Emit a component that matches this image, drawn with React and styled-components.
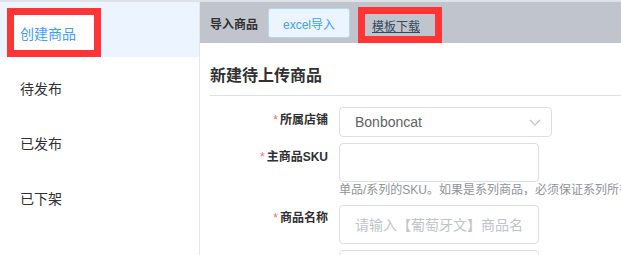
import styled, { createGlobalStyle } from 'styled-components'

const GlobalStyle = createGlobalStyle`
  html, body {
    margin: 0;
    padding: 0;
    background: #fff;
  }
  body {
    font-family: 'Liberation Sans', 'Noto Sans CJK SC', sans-serif;
    color: #303133;
  }
  * {
    box-sizing: border-box;
  }
`

const Page = styled.div`
  display: flex;
  height: 100vh;
  overflow: hidden;
  border-top: 2px solid #dfe2e7;
`

const Sidebar = styled.nav`
  flex: 0 0 200px;
  border-right: 1px solid #e6e6e6;
  display: flex;
  flex-direction: column;
`

const MenuItem = styled.div`
  height: 55px;
  display: flex;
  align-items: center;
  padding-left: 20px;
  font-size: 14px;
  color: #303133;
`

const ActiveItem = styled.div`
  height: 55px;
  margin-bottom: 3px;
  background: #ecf5ff;
  padding: 6px 0 0 7px;
  display: flex;
`

const Marked = styled.span`
  display: flex;
  align-items: center;
  height: 49px;
  border: 7px solid #ff3535;
  background: ${({ $fill }) => $fill || 'transparent'};
  padding: ${({ $pad }) => $pad};
  font-size: ${({ $size }) => $size};
  color: ${({ $color }) => $color};
`

const Main = styled.main`
  flex: 1;
  min-width: 0;
  overflow: hidden;
  display: flex;
  flex-direction: column;
`

const Toolbar = styled.div`
  height: 41px;
  flex: 0 0 41px;
  background: #c0c4cc;
  display: flex;
  align-items: center;
  padding-left: 10px;
`

const ToolLabel = styled.span`
  font-size: 12px;
  font-weight: bold;
  color: #303133;
  margin-right: 10px;
  margin-top: 1px;
`

const PlainButton = styled.button`
  width: 82px;
  height: 30px;
  margin-top: 1px;
  border: 1px solid #b3d8ff;
  background: #ecf5ff;
  color: #409eff;
  border-radius: 3px;
  font-family: inherit;
  font-size: 12px;
  padding: 0;
`

const LinkBox = styled(Marked)`
  align-self: flex-end;
  height: 36px;
  margin-left: 8px;
  text-decoration: underline;
`

const Body = styled.div`
  padding-left: 10px;
`

const Title = styled.h2`
  margin: 0;
  padding: 21px 0 7px;
  font-size: 16px;
  line-height: 24px;
  font-weight: bold;
  color: #303133;
  border-bottom: 1px solid #dcdfe6;
`

const Form = styled.div`
  padding-top: 11px;
  display: flex;
  flex-direction: column;
  gap: 6px;
`

const Row = styled.div`
  display: flex;
  align-items: flex-start;
`

const Label = styled.label`
  flex: 0 0 129px;
  padding-right: 11px;
  text-align: right;
  font-size: 12px;
  font-weight: bold;
  line-height: ${({ $lh }) => $lh || '26px'};
  color: #303133;
  white-space: nowrap;

  &::before {
    content: '*';
    color: #f56c6c;
    margin-right: 2px;
    font-weight: normal;
  }
`

const LabelSpace = styled.div`
  flex: 0 0 129px;
`

const Field = styled.div`
  display: flex;
  flex-direction: column;
  min-width: 0;
`

const Select = styled.div`
  width: 213px;
  height: 30px;
  border: 1px solid #dcdfe6;
  border-radius: 4px;
  display: flex;
  align-items: center;
  justify-content: space-between;
  padding: 0 10px 0 15px;
  font-size: 14px;
  color: #606266;
`

const Input = styled.input`
  width: 200px;
  height: 39px;
  border: 1px solid #dcdfe6;
  border-radius: 4px;
  padding: 0 15px;
  font-family: inherit;
  font-size: 14px;
  color: #606266;
  outline: none;

  &::placeholder {
    color: #c0c4cc;
  }
`

const Help = styled.div`
  font-size: 12px;
  line-height: 17px;
  color: #909399;
  white-space: nowrap;
`

const Chevron = () => (
  <svg width="12" height="7" viewBox="0 0 12 7" fill="none">
    <polyline points="1,1 6,6 11,1" stroke="#c0c4cc" strokeWidth="1.2" />
  </svg>
)

const menu = ['待发布', '已发布', '已下架']

export default function App() {
  return (
    <>
      <GlobalStyle />
      <Page>
        <Sidebar>
          <ActiveItem>
            <Marked $fill="#fff" $pad="0 18px 0 6px" $size="14px" $color="#409eff">
              创建商品
            </Marked>
          </ActiveItem>
          {menu.map((m) => (
            <MenuItem key={m}>{m}</MenuItem>
          ))}
        </Sidebar>
        <Main>
          <Toolbar>
            <ToolLabel>导入商品</ToolLabel>
            <PlainButton>excel导入</PlainButton>
            <LinkBox $pad="0 15px 0 7px" $size="12px" $color="#34495e">
              模板下载
            </LinkBox>
          </Toolbar>
          <Body>
            <Title>新建待上传商品</Title>
            <Form>
              <Row>
                <Label>所属店铺</Label>
                <Select>
                  <span>Bonboncat</span>
                  <Chevron />
                </Select>
              </Row>
              <Row>
                <Label $lh="28px">主商品SKU</Label>
                <Field>
                  <Input />
                  <Help>单品/系列的SKU。如果是系列商品，必须保证系列所有商品的SKU一致</Help>
                </Field>
              </Row>
              <Row>
                <Label>商品名称</Label>
                <Input placeholder="请输入【葡萄牙文】商品名称" />
              </Row>
              <Row>
                <LabelSpace />
                <Input />
              </Row>
            </Form>
          </Body>
        </Main>
      </Page>
    </>
  )
}
